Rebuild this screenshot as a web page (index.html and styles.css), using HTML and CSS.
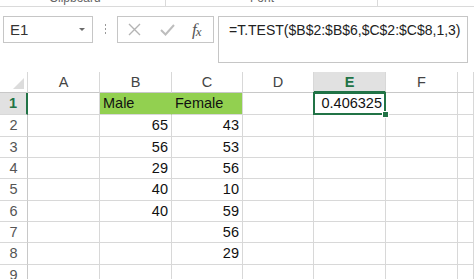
FILE: index.html
```html
<!DOCTYPE html>
<html lang="en">
<head>
    <meta charset="UTF-8">
    <title>T.TEST</title>
    <link rel="stylesheet" href="styles.css">
</head>
<body>
    <div class="ribbon-tail">
        <div class="group g1"><span>Clipboard</span></div>
        <div class="group g2"><span>Font</span></div>
    </div>

    <div class="formula-row">
        <div class="name-box">
            <span>E1</span>
            <span class="arrow"></span>
        </div>
        <div class="grip"><i></i><i></i><i></i></div>
        <div class="fx-buttons">
            <svg class="icon-x" width="13" height="13" viewBox="0 0 13 13">
                <path d="M1 1 L12 12 M12 1 L1 12" stroke="#b4b4b4" stroke-width="1.4" fill="none"/>
            </svg>
            <svg class="icon-ok" width="15" height="12" viewBox="0 0 15 12">
                <path d="M1 6 L5.5 10.5 L14 1" stroke="#bdbdbd" stroke-width="2" fill="none"/>
            </svg>
            <span class="fx">f<sub>x</sub></span>
        </div>
        <div class="formula">=T.TEST($B$2:$B$6,$C$2:$C$8,1,3)</div>
    </div>

    <div class="sheet">
        <!-- header row -->
        <div class="cell corner"><span class="tri"></span></div>
        <div class="cell col-head">A</div>
        <div class="cell col-head">B</div>
        <div class="cell col-head">C</div>
        <div class="cell col-head">D</div>
        <div class="cell col-head active">E</div>
        <div class="cell col-head">F</div>
        <div class="cell col-head"></div>

        <!-- row 1 -->
        <div class="cell row-head active">1</div>
        <div class="cell"></div>
        <div class="cell fill">Male</div>
        <div class="cell fill">Female</div>
        <div class="cell"></div>
        <div class="cell num selected">0.406325</div>
        <div class="cell"></div>
        <div class="cell"></div>

        <!-- row 2 -->
        <div class="cell row-head">2</div>
        <div class="cell"></div>
        <div class="cell num">65</div>
        <div class="cell num">43</div>
        <div class="cell"></div>
        <div class="cell"></div>
        <div class="cell"></div>
        <div class="cell"></div>

        <!-- row 3 -->
        <div class="cell row-head">3</div>
        <div class="cell"></div>
        <div class="cell num">56</div>
        <div class="cell num">53</div>
        <div class="cell"></div>
        <div class="cell"></div>
        <div class="cell"></div>
        <div class="cell"></div>

        <!-- row 4 -->
        <div class="cell row-head">4</div>
        <div class="cell"></div>
        <div class="cell num">29</div>
        <div class="cell num">56</div>
        <div class="cell"></div>
        <div class="cell"></div>
        <div class="cell"></div>
        <div class="cell"></div>

        <!-- row 5 -->
        <div class="cell row-head">5</div>
        <div class="cell"></div>
        <div class="cell num">40</div>
        <div class="cell num">10</div>
        <div class="cell"></div>
        <div class="cell"></div>
        <div class="cell"></div>
        <div class="cell"></div>

        <!-- row 6 -->
        <div class="cell row-head">6</div>
        <div class="cell"></div>
        <div class="cell num">40</div>
        <div class="cell num">59</div>
        <div class="cell"></div>
        <div class="cell"></div>
        <div class="cell"></div>
        <div class="cell"></div>

        <!-- row 7 -->
        <div class="cell row-head">7</div>
        <div class="cell"></div>
        <div class="cell"></div>
        <div class="cell num">56</div>
        <div class="cell"></div>
        <div class="cell"></div>
        <div class="cell"></div>
        <div class="cell"></div>

        <!-- row 8 -->
        <div class="cell row-head">8</div>
        <div class="cell"></div>
        <div class="cell"></div>
        <div class="cell num">29</div>
        <div class="cell"></div>
        <div class="cell"></div>
        <div class="cell"></div>
        <div class="cell"></div>

        <!-- row 9 -->
        <div class="cell row-head">9</div>
        <div class="cell"></div>
        <div class="cell"></div>
        <div class="cell"></div>
        <div class="cell"></div>
        <div class="cell"></div>
        <div class="cell"></div>
        <div class="cell"></div>
    </div>
</body>
</html>
```

FILE: styles.css
```css
body {
    margin: 0;
    background-color: #ffffff;
    font-family: 'Liberation Sans', Arial, sans-serif;
    overflow: hidden;
}

/* bottom edge of the ribbon, labels cut off */
.ribbon-tail {
    display: flex;
    height: 6px;
    border-bottom: 1px solid #dadada;
    overflow: hidden;
}

.group {
    text-align: center;
    font-size: 12px;
    line-height: 12px;
    color: #666666;
    border-right: 1px solid #dadada;
}

.group span {
    display: block;
    margin-top: -8px;
}

.g1 {
    width: 150px;
    padding-right: 15px;
}

.g2 {
    width: 192px;
    padding-right: 19px;
}

/* name box + formula bar */
.formula-row {
    display: flex;
    align-items: flex-start;
    margin-top: 9px;
    padding-left: 3px;
}

.name-box {
    box-sizing: border-box;
    width: 90px;
    height: 27px;
    border: 1px solid #c6c6c6;
    display: flex;
    align-items: center;
    justify-content: space-between;
    padding: 0 7px 0 6px;
    font-size: 15px;
    color: #333333;
}

.arrow {
    width: 0;
    height: 0;
    border-left: 3px solid transparent;
    border-right: 3px solid transparent;
    border-top: 3px solid #6a6a6a;
}

.grip {
    display: flex;
    flex-direction: column;
    gap: 2px;
    margin: 8px 11px 0 12px;
}

.grip i {
    display: block;
    width: 1px;
    height: 2px;
    background-color: #9a9a9a;
}

.fx-buttons {
    box-sizing: border-box;
    width: 97px;
    height: 27px;
    border: 1px solid #c6c6c6;
    display: flex;
    align-items: center;
    padding-left: 10px;
}

.icon-ok {
    margin-left: 19px;
}

.fx {
    margin-left: 17px;
    font-family: 'Liberation Serif', 'Times New Roman', serif;
    font-style: italic;
    font-size: 17px;
    color: #555555;
}

.fx sub {
    font-size: 13px;
    vertical-align: -1px;
    margin-left: -1px;
}

.formula {
    box-sizing: border-box;
    width: 250px;
    height: 47px;
    margin-left: 4px;
    border: 1px solid #c6c6c6;
    padding: 5px 0 0 10px;
    font-size: 14px;
    color: #222222;
    white-space: nowrap;
}

/* worksheet grid */
.sheet {
    display: grid;
    grid-template-columns: 28px 72px 72px 71px 71px 72px 72px 1fr;
    grid-template-rows: 21px 22px 22px 21px 21px 22px 21px 21px 22px 22px;
    margin-top: 9px;
}

.cell {
    box-sizing: border-box;
    border-right: 1px solid #d8d8d8;
    border-bottom: 1px solid #d8d8d8;
    font-size: 14.5px;
    line-height: 21px;
    padding: 0 3px;
    color: #111111;
    white-space: nowrap;
}

.corner {
    position: relative;
    border-bottom-color: #c8c8c8;
}

.tri {
    position: absolute;
    right: 3px;
    bottom: 3px;
    width: 0;
    height: 0;
    border-left: 11px solid transparent;
    border-bottom: 11px solid #dcdcdc;
}

.col-head {
    text-align: center;
    color: #444444;
    border-bottom-color: #c8c8c8;
    line-height: 20px;
}

.row-head {
    text-align: center;
    padding: 0;
    color: #555555;
    border-right-color: #c8c8c8;
}

.col-head.active,
.row-head.active {
    background-color: #e1e1e1;
    color: #217346;
    font-weight: bold;
}

.col-head.active {
    border-bottom: 2px solid #217346;
}

.row-head.active {
    border-right: 2px solid #217346;
}

.fill {
    background-color: #92d050;
    border-right-color: #92d050;
}

.fill + .fill {
    border-right-color: #d8d8d8;
}

.num {
    text-align: right;
}

.selected {
    position: relative;
}

.selected::after {
    content: "";
    position: absolute;
    left: -1px;
    top: -1px;
    right: -1px;
    bottom: -1px;
    border: 2px solid #217346;
}

.selected::before {
    content: "";
    position: absolute;
    right: -4px;
    bottom: -4px;
    width: 5px;
    height: 5px;
    background-color: #217346;
    border: 1px solid #ffffff;
    z-index: 1;
}
```
